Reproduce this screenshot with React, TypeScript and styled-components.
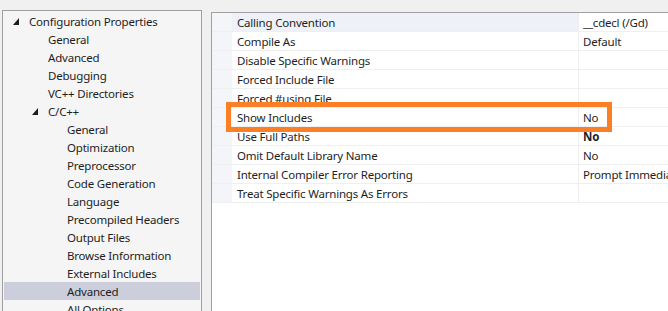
import React from "react";
import styled, { createGlobalStyle } from "styled-components";

const GlobalStyle = createGlobalStyle`
  html, body {
    margin: 0;
    padding: 0;
    background: #f0f0f0;
    overflow: hidden;
  }
  body {
    font-family: "Noto Sans", "Open Sans", sans-serif;
    font-size: 11.5px;
    letter-spacing: -0.2px;
    color: #1e1e1e;
  }
`;

const Page = styled.div`
  display: flex;
  align-items: flex-start;
  height: 311px;
  padding: 10px 0 0 2px;
  box-sizing: border-box;
  overflow: hidden;
`;

const TreePanel = styled.div`
  width: 200px;
  height: 301px;
  box-sizing: border-box;
  flex-shrink: 0;
  background: #f5f5f5;
  border: 1px solid #a0a0a0;
  border-bottom: none;
  padding-top: 1px;
  overflow: hidden;
`;

const TreeRow = styled.div<{ $level: number; $selected?: boolean }>`
  display: flex;
  align-items: center;
  height: 18px;
  margin: 0 1px;
  padding-left: ${(p) => 9 + p.$level * 19}px;
  background: ${(p) => (p.$selected ? "#cccedb" : "transparent")};
  white-space: nowrap;
`;

const Toggle = styled.span`
  display: inline-flex;
  width: 16px;
  height: 18px;
  align-items: center;
  justify-content: flex-start;
  flex-shrink: 0;
`;

const GridPanel = styled.div`
  position: relative;
  flex: 1;
  height: 299px;
  margin: 2px 0 0 9px;
  background: #ffffff;
  border-left: 1px solid #a0a0a0;
  border-top: 1px solid #a0a0a0;
  overflow: hidden;
`;

const GridRow = styled.div<{ $selected?: boolean }>`
  display: grid;
  grid-template-columns: 20px 347px 1fr;
  height: 19px;
  box-sizing: border-box;
  border-bottom: 1px solid #efefef;
  white-space: nowrap;
  background: ${(p) => (p.$selected ? "#eef2f8" : "#ffffff")};
`;

const Gutter = styled.div`
  background: #f3f5f9;
`;

const NameCell = styled.div`
  display: flex;
  align-items: center;
  padding-left: 5px;
  border-right: 1px solid #efefef;
  overflow: hidden;
`;

const ValueCell = styled.div<{ $bold?: boolean }>`
  display: flex;
  align-items: center;
  padding-left: 4px;
  background: #ffffff;
  font-weight: ${(p) => (p.$bold ? 700 : 400)};
  overflow: hidden;
`;

const Highlight = styled.div`
  position: absolute;
  left: 14px;
  top: 89px;
  width: 386px;
  height: 30px;
  box-sizing: border-box;
  border: 5px solid #fb7f27;
  pointer-events: none;
`;

const ExpandedIcon = () => (
  <svg width="6" height="7" viewBox="0 0 6 7">
    <polygon points="6,0 6,7 0,7" fill="#1e1e1e" />
  </svg>
);

const tree: { label: string; level: number; expanded?: boolean; selected?: boolean }[] = [
  { label: "Configuration Properties", level: 0, expanded: true },
  { label: "General", level: 1 },
  { label: "Advanced", level: 1 },
  { label: "Debugging", level: 1 },
  { label: "VC++ Directories", level: 1 },
  { label: "C/C++", level: 1, expanded: true },
  { label: "General", level: 2 },
  { label: "Optimization", level: 2 },
  { label: "Preprocessor", level: 2 },
  { label: "Code Generation", level: 2 },
  { label: "Language", level: 2 },
  { label: "Precompiled Headers", level: 2 },
  { label: "Output Files", level: 2 },
  { label: "Browse Information", level: 2 },
  { label: "External Includes", level: 2 },
  { label: "Advanced", level: 2, selected: true },
  { label: "All Options", level: 2 },
];

const properties: { name: string; value: string; bold?: boolean }[] = [
  { name: "Calling Convention", value: "__cdecl (/Gd)" },
  { name: "Compile As", value: "Default" },
  { name: "Disable Specific Warnings", value: "" },
  { name: "Forced Include File", value: "" },
  { name: "Forced #using File", value: "" },
  { name: "Show Includes", value: "No" },
  { name: "Use Full Paths", value: "No", bold: true },
  { name: "Omit Default Library Name", value: "No" },
  { name: "Internal Compiler Error Reporting", value: "Prompt Immediately (/errorReport:prompt)" },
  { name: "Treat Specific Warnings As Errors", value: "" },
];

const App = () => {
  return (
    <>
      <GlobalStyle />
      <Page>
        <TreePanel>
          {tree.map((node, i) => (
            <TreeRow key={i} $level={node.level} $selected={node.selected}>
              <Toggle>{node.expanded && <ExpandedIcon />}</Toggle>
              <span>{node.label}</span>
            </TreeRow>
          ))}
        </TreePanel>
        <GridPanel>
          {properties.map((prop, i) => (
            <GridRow key={prop.name} $selected={i === 0}>
              <Gutter />
              <NameCell>{prop.name}</NameCell>
              <ValueCell $bold={prop.bold}>{prop.value}</ValueCell>
            </GridRow>
          ))}
          <Highlight />
        </GridPanel>
      </Page>
    </>
  );
};

export default App;
